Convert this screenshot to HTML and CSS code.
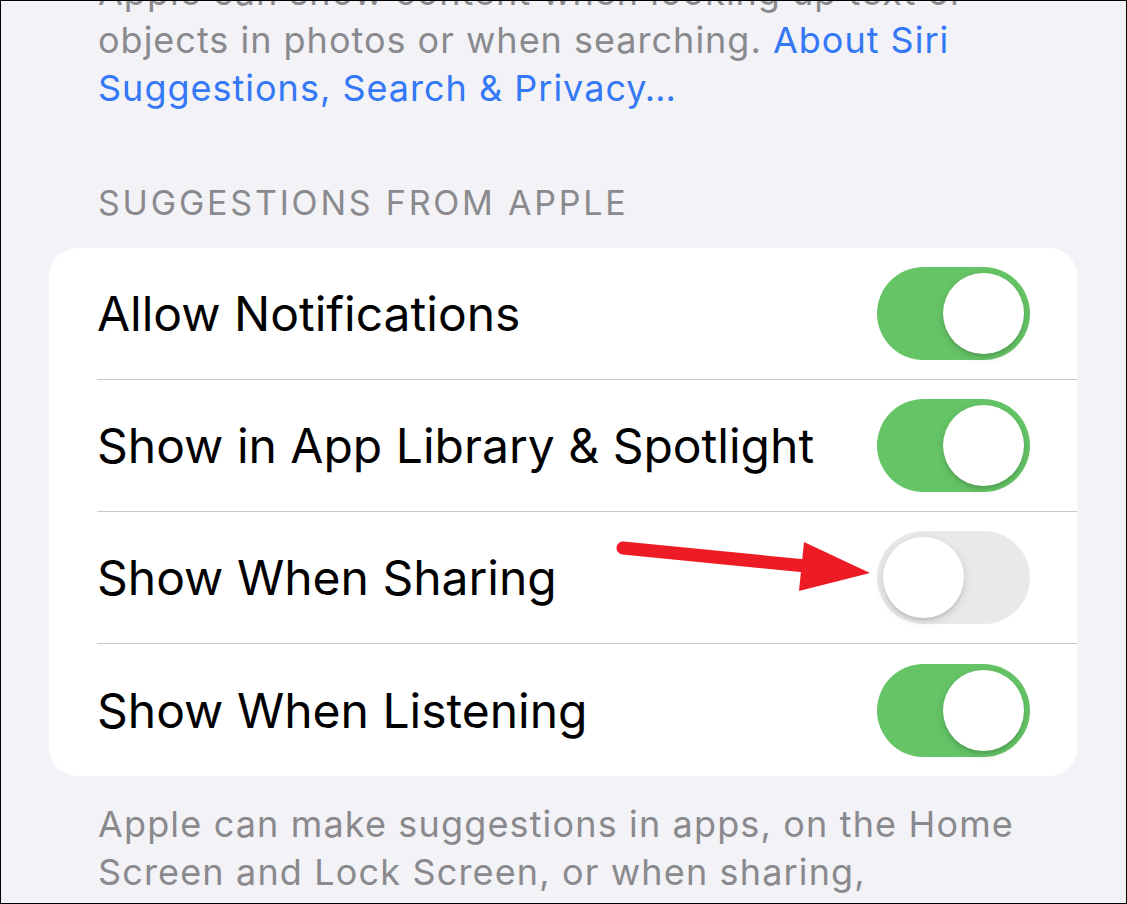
FILE: index.html
```html
<!DOCTYPE html>
<html lang="en">
<head>
    <meta charset="UTF-8">
    <meta name="viewport" content="width=device-width, initial-scale=1.0">
    <title>Siri &amp; Search</title>
    <link rel="stylesheet" href="styles.css">
</head>
<body>
    <div class="screen">
        <p class="note note-top">
            Apple can show content when looking up text or<br>
            objects in photos or when searching. <a href="#" class="link">About Siri<br>
            Suggestions, Search &amp; Privacy…</a>
        </p>

        <h2 class="section-title">SUGGESTIONS FROM APPLE</h2>

        <div class="group">
            <div class="row">
                <span class="label">Allow Notifications</span>
                <span class="switch on"><span class="knob"></span></span>
            </div>
            <div class="row">
                <span class="label">Show in App Library &amp; Spotlight</span>
                <span class="switch on"><span class="knob"></span></span>
            </div>
            <div class="row">
                <span class="label">Show When Sharing</span>
                <span class="switch"><span class="knob"></span></span>
            </div>
            <div class="row">
                <span class="label">Show When Listening</span>
                <span class="switch on"><span class="knob"></span></span>
            </div>
        </div>

        <p class="note note-bottom">
            Apple can make suggestions in apps, on the Home<br>
            Screen and Lock Screen, or when sharing,<br>
            searching, or using Look Up and Keyboard.
        </p>

        <!-- red callout pointing at the switch that is off -->
        <svg class="callout" width="1127" height="904" viewBox="0 0 1127 904">
            <line x1="623" y1="548" x2="806" y2="566" stroke="#ed1c24" stroke-width="13" stroke-linecap="round"/>
            <polygon points="804,542 870,573 799,591" fill="#ed1c24"/>
        </svg>
    </div>
</body>
</html>
```

FILE: styles.css
```css
* {
    box-sizing: border-box;
}

body {
    margin: 0;
    padding: 0;
    font-family: Inter, "Noto Sans", sans-serif;
    background-color: #ffffff;
}

.screen {
    position: relative;
    width: 1127px;
    height: 904px;
    overflow: hidden;
    border: 1px solid #000000;
    background-color: #f2f2f7;
}

.note {
    margin: 24px 0 0;
    padding-left: 97px;
    font-size: 36px;
    line-height: 48px;
    letter-spacing: 1px;
    white-space: nowrap;
    color: #8a8a8e;
}

.note-top {
    margin-top: -33px;
}

.note-bottom {
    letter-spacing: 1.15px;
}

.link {
    color: #3478f6;
    text-decoration: none;
}

.section-title {
    margin: 71px 0 25px;
    padding-left: 97px;
    font-size: 34px;
    line-height: 40px;
    font-weight: 400;
    color: #8a8a8e;
    letter-spacing: 2.8px;
}

.group {
    margin: 0 49px 0 48px;
    padding-left: 48px;
    background-color: #ffffff;
    border-radius: 28px;
}

.row {
    display: flex;
    align-items: center;
    justify-content: space-between;
    height: 132px;
    padding-right: 47px;
    border-bottom: 1px solid #c8c8cc;
}

.row:last-child {
    border-bottom: none;
}

.label {
    font-size: 48px;
    color: #000000;
}

.switch {
    position: relative;
    width: 153px;
    height: 93px;
    border-radius: 47px;
    background-color: #e9e9eb;
}

.switch.on {
    background-color: #65c466;
}

.knob {
    position: absolute;
    top: 6px;
    left: 6px;
    width: 81px;
    height: 81px;
    border-radius: 50%;
    background-color: #ffffff;
    box-shadow: 0 3px 8px rgba(0, 0, 0, 0.15), 0 3px 1px rgba(0, 0, 0, 0.06);
}

.switch.on .knob {
    left: 66px;
}

.callout {
    position: absolute;
    top: -1px;
    left: -1px;
    pointer-events: none;
}
```
